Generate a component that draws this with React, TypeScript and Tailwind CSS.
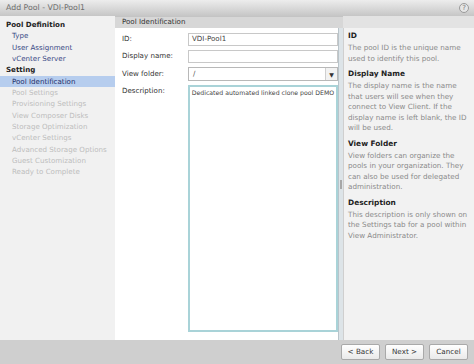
import React from 'react';

const defItems = ['Type', 'User Assignment', 'vCenter Server'];
const settingItems = [
  'Pool Identification',
  'Pool Settings',
  'Provisioning Settings',
  'View Composer Disks',
  'Storage Optimization',
  'vCenter Settings',
  'Advanced Storage Options',
  'Guest Customization',
  'Ready to Complete',
];

const help = [
  { title: 'ID', lines: ['The pool ID is the unique name', 'used to identify this pool.'] },
  {
    title: 'Display Name',
    lines: ['The display name is the name', 'that users will see when they', 'connect to View Client. If the', 'display name is left blank, the ID', 'will be used.'],
  },
  {
    title: 'View Folder',
    lines: ['View folders can organize the', 'pools in your organization. They', 'can also be used for delegated', 'administration.'],
  },
  {
    title: 'Description',
    lines: ['This description is only shown on', 'the Settings tab for a pool within', 'View Administrator.'],
  },
];

const App: React.FC = () => {
  return (
    <div
      className="w-[474px] h-[364px] flex flex-col bg-white overflow-hidden text-[7.1px] text-[#333]"
      style={{ fontFamily: '"DejaVu Sans", Verdana, sans-serif' }}
    >
      {/* Title bar */}
      <div className="h-[16px] shrink-0 flex items-center justify-between pl-[6px] pr-[5px] bg-gradient-to-b from-[#ededed] to-[#c6c6c6]">
        <span className="text-[7.8px] text-[#6f6f6f]">Add Pool - VDI-Pool1</span>
        <span className="w-[10px] h-[10px] rounded-full border border-[#9a9a9a] bg-[#e6e6e6] flex items-center justify-center text-[7px] text-[#777] leading-none">?</span>
      </div>

      <div className="flex-1 flex min-h-0">
        {/* Sidebar */}
        <div className="w-[115px] shrink-0 bg-[#f1f1f1] pt-[3px] leading-[11.35px]">
          <div className="pl-[6px] font-bold text-[#222]">Pool Definition</div>
          {defItems.map(i => (
            <div key={i} className="pl-[12px] text-[#3a4a86]">{i}</div>
          ))}
          <div className="pl-[6px] font-bold text-[#222]">Setting</div>
          {settingItems.map((i, idx) => (
            <div
              key={i}
              className={`pl-[12px] ${idx === 0 ? 'bg-[#b6cdee] text-[#1f2f6a]' : 'text-[#bdbdbd]'}`}
            >
              {i}
            </div>
          ))}
        </div>

        {/* Center */}
        <div className="w-[223px] shrink-0 flex flex-col">
          <div className="h-[12px] shrink-0 bg-[#d7d7d7] border-t border-[#c4c4c4] pl-[7px] flex items-center text-[#333]">
            Pool Identification
          </div>
          <div className="flex-1 flex flex-col pl-[7px] pt-[5px] pb-[8px] gap-[4px]">
            <div className="flex items-center">
              <span className="w-[66px]">ID:</span>
              <div className="w-[150px] h-[13px] border border-[#c8c8c8] bg-white pl-[3px] flex items-center text-[#444]">VDI-Pool1</div>
            </div>
            <div className="flex items-center">
              <span className="w-[66px]">Display name:</span>
              <div className="w-[150px] h-[13px] border border-[#c8c8c8] bg-white" />
            </div>
            <div className="flex items-center">
              <span className="w-[66px]">View folder:</span>
              <div className="w-[150px] h-[14px] border border-[#b8b8b8] bg-white flex items-center">
                <span className="flex-1 pl-[4px] text-[#555]">/</span>
                <span className="w-[12px] h-full border-l border-[#cfcfcf] bg-[#f2f2f2] flex items-center justify-center text-[6px] text-[#333]">▼</span>
              </div>
            </div>
            <div className="flex flex-1 min-h-0">
              <span className="w-[66px] pt-[1px]">Description:</span>
              <div className="w-[151px] border-2 border-[#a9d3d8] bg-white px-[2px] pt-[1px] text-[6.2px] text-[#444] leading-[9px] whitespace-nowrap overflow-hidden">
                Dedicated automated linked clone pool DEMO
              </div>
            </div>
          </div>
        </div>

        {/* Splitter */}
        <div className="w-[5px] shrink-0 flex flex-col">
          <div className="h-[12px] bg-[#d7d7d7] border-t border-[#c4c4c4]" />
          <div className="flex-1 bg-[#dde4e8] border-l border-[#b9c4ca] flex items-center justify-center">
            <div className="w-[2px] h-[9px] bg-[#a7a7a7]" />
          </div>
        </div>

        {/* Help panel */}
        <div className="flex-1 flex flex-col bg-[#f2f2f2]">
          <div className="h-[12px] shrink-0 bg-[#e3e3e3]" />
          <div className="flex-1 border-l border-[#cfcfcf] pl-[4px] pt-[1px] text-[7.2px] leading-[10.5px]">
            {help.map(h => (
              <div key={h.title} className="mb-[3px]">
                <div className="font-bold text-[#222] text-[7.4px] leading-[14px]">{h.title}</div>
                {h.lines.map(l => (
                  <div key={l} className="text-[#8a8a8a] whitespace-nowrap">{l}</div>
                ))}
              </div>
            ))}
          </div>
        </div>
      </div>

      {/* Bottom bar */}
      <div className="h-[24px] shrink-0 bg-[#cfcfcf] flex items-center justify-end gap-[5px] pr-[6px]">
        {['< Back', 'Next >', 'Cancel'].map(b => (
          <button
            key={b}
            className="w-[39px] h-[16px] rounded-[2px] border border-[#a9a9a9] bg-gradient-to-b from-white to-[#eaeaea] text-[7.2px] text-[#333]"
          >
            {b}
          </button>
        ))}
      </div>
    </div>
  );
};

export default App;
